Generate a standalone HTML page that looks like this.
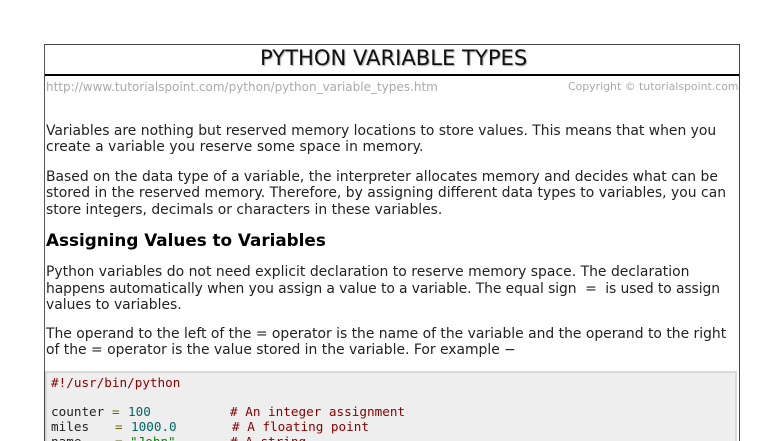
<!DOCTYPE html>
<html><head><meta charset="utf-8"><style>
html,body{margin:0;padding:0;background:#fff;width:784px;height:441px;overflow:hidden}
body{position:relative;font-family:"DejaVu Sans",sans-serif;color:#000}
.a{position:absolute;white-space:pre;line-height:16px}
.t{font-size:13.9px;left:46px;color:#222}
.m{font-family:"DejaVu Sans Mono","Liberation Mono",monospace;font-size:12.65px;line-height:15px;color:#222}
.c{color:#800}.o{color:#660}.n{color:#066}.s{color:#080}
</style></head><body>
<div class="a" style="left:44px;top:44px;width:694px;height:397px;border:1px solid #444;border-bottom:0"></div>
<div class="a" style="left:44px;top:44px;width:1px;height:327px;background:#555"></div>
<div class="a" style="left:45px;top:74px;width:694px;height:2px;background:#000"></div>
<div class="a" style="left:260px;top:46px;font-size:21.1px;line-height:24px;color:#111;text-shadow:1px 1px 1px #aaa">PYTHON VARIABLE TYPES</div>
<div class="a" style="left:46px;top:79px;font-size:12px;color:#aaa">http://www.tutorialspoint.com/python/python_variable_types.htm</div>
<div class="a" style="left:568px;top:79px;font-size:10.9px;color:#aaa">Copyright © tutorialspoint.com</div>
<div class="a t" style="top:123px">Variables are nothing but reserved memory locations to store values. This means that when you</div>
<div class="a t" style="top:139px;letter-spacing:.08px">create a variable you reserve some space in memory.</div>
<div class="a t" style="top:169px">Based on the data type of a variable, the interpreter allocates memory and decides what can be</div>
<div class="a t" style="top:185px;letter-spacing:.02px">stored in the reserved memory. Therefore, by assigning different data types to variables, you can</div>
<div class="a t" style="top:202px">store integers, decimals or characters in these variables.</div>
<div class="a" style="left:46px;top:230px;font-size:16.8px;line-height:20px;font-weight:bold">Assigning Values to Variables</div>
<div class="a t" style="top:264px;letter-spacing:.03px">Python variables do not need explicit declaration to reserve memory space. The declaration</div>
<div class="a t" style="top:281px;letter-spacing:-.09px">happens automatically when you assign a value to a variable. The equal sign  =  is used to assign</div>
<div class="a t" style="top:297px">values to variables.</div>
<div class="a t" style="top:326px">The operand to the left of the = operator is the name of the variable and the operand to the right</div>
<div class="a t" style="top:342px">of the = operator is the value stored in the variable. For example −</div>
<div class="a" style="left:45px;top:371px;width:688px;height:70px;background:#eee;border:2px solid #d9d9d9;border-bottom:0"></div>
<div class="a m c" style="top:375px;left:51px">#!/usr/bin/python</div>
<div class="a m" style="top:404px;left:51px">counter</div><div class="a m o" style="top:404px;left:112px">=</div><div class="a m n" style="top:404px;left:128px">100</div><div class="a m c" style="top:404px;left:230px"># An integer assignment</div>
<div class="a m" style="top:419px;left:51px">miles</div><div class="a m o" style="top:419px;left:115px">=</div><div class="a m n" style="top:419px;left:131px">1000.0</div><div class="a m c" style="top:419px;left:232px"># A floating point</div>
<div class="a m" style="top:434px;left:51px">name</div><div class="a m o" style="top:434px;left:115px">=</div><div class="a m s" style="top:434px;left:130px">"John"</div><div class="a m c" style="top:434px;left:230px"># A string</div>
</body></html>
